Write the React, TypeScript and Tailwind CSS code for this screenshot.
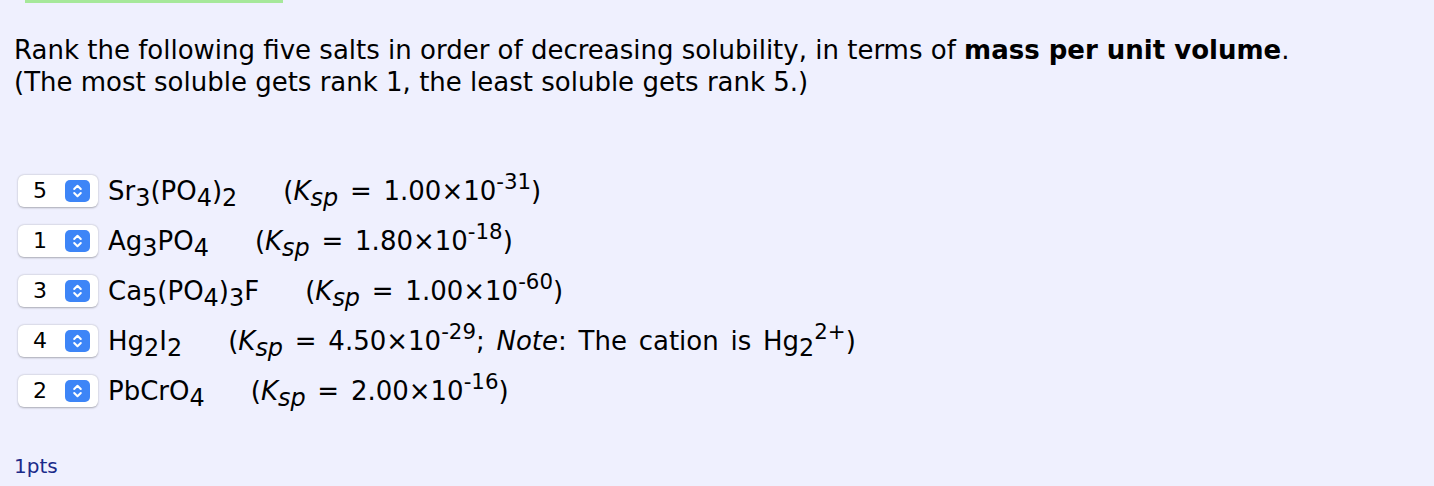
import React from 'react';

const ROWS = [
  { rank: '5', formula: <>Sr<Sub>3</Sub>(PO<Sub>4</Sub>)<Sub>2</Sub></>, ksp: '1.00×10', exp: '-31' },
  { rank: '1', formula: <>Ag<Sub>3</Sub>PO<Sub>4</Sub></>, ksp: '1.80×10', exp: '-18' },
  { rank: '3', formula: <>Ca<Sub>5</Sub>(PO<Sub>4</Sub>)<Sub>3</Sub>F</>, ksp: '1.00×10', exp: '-60' },
  { rank: '4', formula: <>Hg<Sub>2</Sub>I<Sub>2</Sub></>, ksp: '4.50×10', exp: '-29', note: true },
  { rank: '2', formula: <>PbCrO<Sub>4</Sub></>, ksp: '2.00×10', exp: '-16' },
];

function Sub({ children }: { children: React.ReactNode }) {
  return <span className="relative top-[6px] text-[0.92em] leading-none">{children}</span>;
}

function Sup({ children }: { children: React.ReactNode }) {
  return <span className="relative -top-[11px] text-[0.82em] leading-none">{children}</span>;
}

function RankSelect({ value }: { value: string }) {
  return (
    <div className="flex h-[32px] w-[80px] shrink-0 items-center justify-between rounded-[6px] bg-white pl-[15px] pr-[8px] shadow-[0_0.5px_2px_rgba(0,0,0,0.3)]">
      <span className="text-[22px] leading-none text-black">{value}</span>
      <span className="flex h-[22px] w-[25px] items-center justify-center rounded-[5px] bg-[#3d85f7]">
        <svg width="11" height="16" viewBox="0 0 11 16" fill="none" stroke="white" strokeWidth="2" strokeLinecap="round" strokeLinejoin="round">
          <path d="M2.2 6 L5.5 2.7 L8.8 6" />
          <path d="M2.2 10 L5.5 13.3 L8.8 10" />
        </svg>
      </span>
    </div>
  );
}

export default function App() {
  return (
    <div className="relative min-h-[486px] w-full bg-[#eff0fe] font-['DejaVu_Sans',Verdana,sans-serif] text-black">
      <div className="ml-[25px] h-[3px] w-[258px] bg-[#a6e89a]" />

      <p className="ml-[14px] mt-[31px] text-[26px] leading-[32px]">
        Rank the following five salts in order of decreasing solubility, in terms of <b>mass per unit volume</b>.
        <br />
        (The most soluble gets rank 1, the least soluble gets rank 5.)
      </p>

      <div className="ml-[18px] mt-[77px] flex flex-col gap-[18px]">
        {ROWS.map((row) => (
          <div key={row.rank} className="flex h-[32px] items-center text-[26px]">
            <RankSelect value={row.rank} />
            <span className="ml-[10px] whitespace-nowrap">{row.formula}</span>
            <span className="ml-[46px] whitespace-nowrap [word-spacing:3.5px]">
              (<i>K<Sub>sp</Sub></i> = {row.ksp}<Sup>{row.exp}</Sup>
              {row.note && (
                <>
                  ; <i>Note</i>: The cation is Hg<Sub>2</Sub><Sup>2+</Sup>
                </>
              )}
              )
            </span>
          </div>
        ))}
      </div>

      <div className="ml-[14px] mt-[44px] text-[20px] text-[#1b2a8a]">1pts</div>
    </div>
  );
}
